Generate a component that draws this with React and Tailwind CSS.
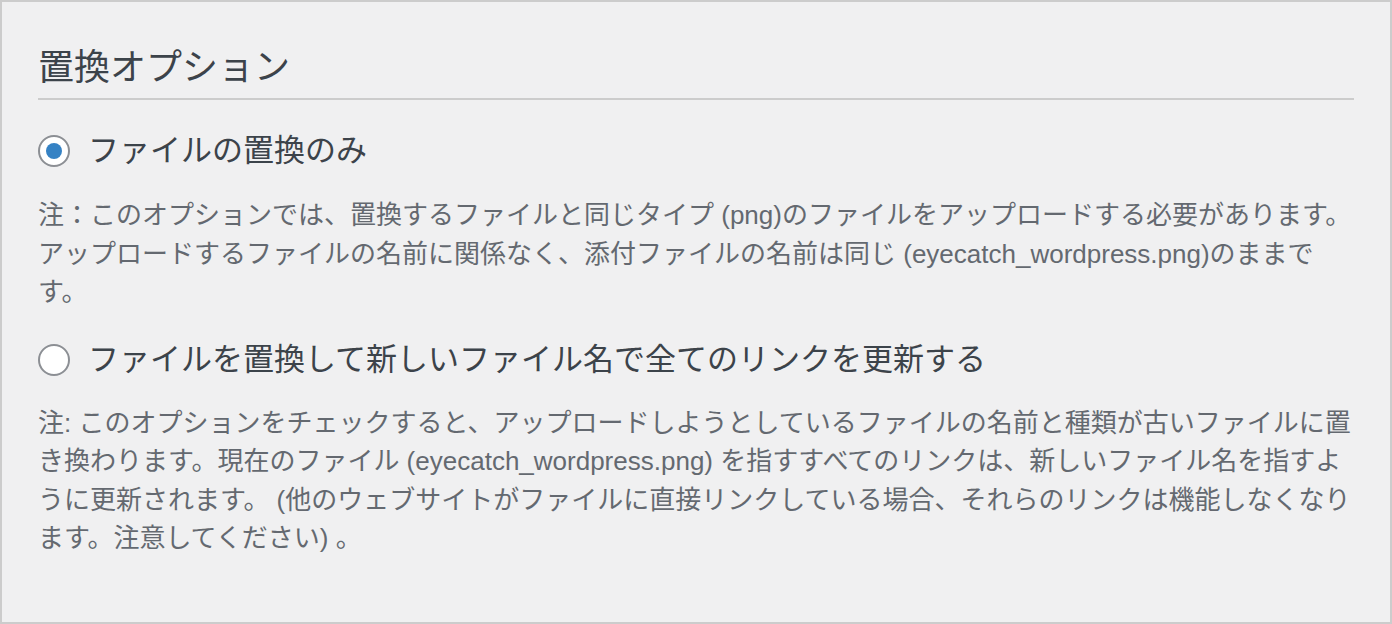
import React, { useState } from "react";

const FONT = {
  fontFamily: '"Liberation Sans", "Noto Sans CJK JP", sans-serif',
};

const Radio = ({ checked, onChange, label }) => (
  <label className="flex items-center cursor-pointer h-[40px]">
    <span
      onClick={onChange}
      className="flex items-center justify-center w-[32px] h-[32px] rounded-full border-2 border-[#8c8f94] bg-white shrink-0"
    >
      {checked && <span className="w-[16px] h-[16px] rounded-full bg-[#3582c4]" />}
    </span>
    <span className="ml-[18px] text-[31px] leading-[40px] text-[#3c434a]">{label}</span>
  </label>
);

const App = () => {
  const [mode, setMode] = useState("replace");

  return (
    <div className="w-[1392px] h-[624px] bg-[#f0f0f1]" style={FONT}>
      <div className="h-full border-2 border-[#cccccc] pt-[41px] pl-[36px] pr-[36px]">
        <h2 className="text-[36px] leading-[49px] text-[#3c434a] pb-[6px] border-b-2 border-[#cccccc]">
          置換オプション
        </h2>

        <div className="mt-[31px]">
          <Radio
            checked={mode === "replace"}
            onChange={() => setMode("replace")}
            label="ファイルの置換のみ"
          />
        </div>
        <p className="mt-[25px] text-[26px] leading-[38.5px] text-[#646970] whitespace-nowrap">
          注：このオプションでは、置換するファイルと同じタイプ (png)のファイルをアップロードする必要があります。
          <br />
          アップロードするファイルの名前に関係なく、添付ファイルの名前は同じ (eyecatch_wordpress.png)のままで
          <br />
          す。
        </p>

        <div className="mt-[28px]">
          <Radio
            checked={mode === "rename"}
            onChange={() => setMode("rename")}
            label="ファイルを置換して新しいファイル名で全てのリンクを更新する"
          />
        </div>
        <p className="mt-[24px] text-[26px] leading-[38.5px] text-[#646970] whitespace-nowrap">
          注: このオプションをチェックすると、アップロードしようとしているファイルの名前と種類が古いファイルに置
          <br />
          き換わります。現在のファイル (eyecatch_wordpress.png) を指すすべてのリンクは、新しいファイル名を指すよ
          <br />
          うに更新されます。 (他のウェブサイトがファイルに直接リンクしている場合、それらのリンクは機能しなくなり
          <br />
          ます。注意してください) 。
        </p>
      </div>
    </div>
  );
};

export default App;
